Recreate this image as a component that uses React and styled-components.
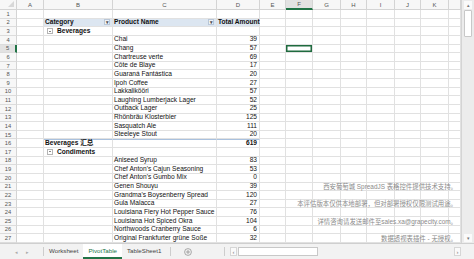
import React from 'react'
import styled, { createGlobalStyle } from 'styled-components'

const GlobalStyle = createGlobalStyle`
  html, body { margin: 0; padding: 0; background: #fff; overflow: hidden; }
  body { font-family: "Liberation Sans", Arial, "Noto Sans CJK SC", sans-serif; }
`

const COLS = ['A', 'B', 'C', 'D', 'E', 'F', 'G', 'H', 'I', 'J', 'K', 'L']
const WIDTHS = [17, 27, 69, 104, 43, 26, 27, 28, 26, 28, 26, 28, 12]
const ROW_COUNT = 27

// pivot table content, keyed by row number
const PIVOT = {
  2: { head: true },
  3: { group: 'Beverages' },
  4: { name: 'Chai', amount: 39 },
  5: { name: 'Chang', amount: 57 },
  6: { name: 'Chartreuse verte', amount: 69 },
  7: { name: 'Côte de Blaye', amount: 17 },
  8: { name: 'Guaraná Fantástica', amount: 20 },
  9: { name: 'Ipoh Coffee', amount: 27 },
  10: { name: 'Lakkalikööri', amount: 57 },
  11: { name: 'Laughing Lumberjack Lager', amount: 52 },
  12: { name: 'Outback Lager', amount: 25 },
  13: { name: 'Rhönbräu Klosterbier', amount: 125 },
  14: { name: 'Sasquatch Ale', amount: 111 },
  15: { name: 'Steeleye Stout', amount: 20 },
  16: { total: 'Beverages 汇总', amount: 619 },
  17: { group: 'Condiments' },
  18: { name: 'Aniseed Syrup', amount: 83 },
  19: { name: "Chef Anton's Cajun Seasoning", amount: 53 },
  20: { name: "Chef Anton's Gumbo Mix", amount: 0 },
  21: { name: 'Genen Shouyu', amount: 39 },
  22: { name: "Grandma's Boysenberry Spread", amount: 120 },
  23: { name: 'Gula Malacca', amount: 27 },
  24: { name: 'Louisiana Fiery Hot Pepper Sauce', amount: 76 },
  25: { name: 'Louisiana Hot Spiced Okra', amount: 104 },
  26: { name: 'Northwoods Cranberry Sauce', amount: 6 },
  27: { name: 'Original Frankfurter grüne Soße', amount: 32 },
}

const WATERMARK = [
  '西安葡萄城 SpreadJS 表格控件提供技术支持。',
  '本评估版本仅供本地部署，但对部署授权仅限测试用途。',
  '详情咨询请发送邮件至sales.xa@grapecity.com。',
  '数据透视表插件 - 无授权。',
]

const App = () => {
  const rows = []
  for (let r = 1; r <= ROW_COUNT; r++) rows.push(r)

  const renderCell = (r, c) => {
    const p = PIVOT[r]
    const col = COLS[c]
    const key = `${col}${r}`
    const inPivot = ['B', 'C', 'D'].includes(col)
    if (!p || !inPivot) {
      return <Cell key={key} $selected={key === 'F5'} />
    }
    if (p.head) {
      const label = { B: 'Category', C: 'Product Name', D: 'Total Amount' }[col]
      return (
        <Cell key={key} $head $bold $align="space-between">
          <span>{label}</span>
          {col !== 'D' && <DropButton>▾</DropButton>}
        </Cell>
      )
    }
    if (p.group) {
      return (
        <Cell key={key} $bold>
          {col === 'B' && (
            <>
              <Collapse />
              <span>{p.group}</span>
            </>
          )}
        </Cell>
      )
    }
    if (p.total) {
      return (
        <Cell key={key} $bold $totalRow $align={col === 'D' ? 'flex-end' : 'flex-start'}>
          {col === 'B' && p.total}
          {col === 'D' && p.amount}
        </Cell>
      )
    }
    return (
      <Cell key={key} $align={col === 'D' ? 'flex-end' : 'flex-start'}>
        {col === 'C' && p.name}
        {col === 'D' && p.amount}
      </Cell>
    )
  }

  return (
    <>
      <GlobalStyle />
      <Page>
        <Workarea>
          <Sheet>
            <Corner>
              <CornerMark />
            </Corner>
            {COLS.map((c) => (
              <ColHeader key={c} $active={c === 'F'}>
                {c === 'L' ? '' : c}
              </ColHeader>
            ))}
            {rows.map((r) => (
              <React.Fragment key={r}>
                <RowHeader $active={r === 5}>{r}</RowHeader>
                {COLS.map((_, c) => renderCell(r, c))}
              </React.Fragment>
            ))}
            <Watermark>
              {WATERMARK.map((t) => (
                <div key={t}>{t}</div>
              ))}
            </Watermark>
          </Sheet>
          <VScroll>
            <ArrowBox>▴</ArrowBox>
            <VThumb />
            <VTrack />
            <ArrowBox>▾</ArrowBox>
          </VScroll>
        </Workarea>
        <TabBar>
          <Tabs>
            <NavArrows>
              <span>◂</span>
              <span>▸</span>
            </NavArrows>
            <Divider />
            <Tab>Worksheet</Tab>
            <Tab $active>PivotTable</Tab>
            <Tab>TableSheet1</Tab>
          </Tabs>
          <Divider />
          <AddButton>
            <svg width="8" height="8" viewBox="0 0 8 8">
              <circle cx="4" cy="4" r="3.4" fill="none" stroke="#8a8a8a" strokeWidth="0.7" />
              <path d="M4 2v4M2 4h4" stroke="#8a8a8a" strokeWidth="0.7" />
            </svg>
          </AddButton>
          <Divider />
          <HScroll>
            <HArrow>‹</HArrow>
            <HThumb />
            <HTrack />
            <HArrow>›</HArrow>
          </HScroll>
        </TabBar>
      </Page>
    </>
  )
}

const Page = styled.div`
  width: 474px;
  height: 259px;
  display: flex;
  flex-direction: column;
  overflow: hidden;
  font-family: "Liberation Sans", Arial, "Noto Sans CJK SC", sans-serif;
`

const Workarea = styled.div`
  display: flex;
  height: 243px;
`

const Sheet = styled.div`
  position: relative;
  flex: 1;
  display: grid;
  grid-template-columns: ${WIDTHS.map((w) => `${w}px`).join(' ')};
  grid-template-rows: 10px repeat(${ROW_COUNT}, 8.63px);
  overflow: hidden;
`

const Corner = styled.div`
  background: #f7f7f7;
  border-right: 1px solid #d4d4d4;
  border-bottom: 1px solid #d4d4d4;
  position: relative;
`

const CornerMark = styled.div`
  position: absolute;
  right: 2px;
  bottom: 2px;
  width: 0;
  height: 0;
  border-left: 6px solid transparent;
  border-bottom: 6px solid #d8d8d8;
`

const ColHeader = styled.div`
  background: ${(p) => (p.$active ? '#e2e2e2' : '#f7f7f7')};
  border-right: 1px solid #d4d4d4;
  border-bottom: ${(p) => (p.$active ? '2px solid #217346' : '1px solid #d4d4d4')};
  color: #555;
  font-size: 6px;
  display: flex;
  align-items: center;
  justify-content: center;
  box-sizing: border-box;
`

const RowHeader = styled.div`
  background: ${(p) => (p.$active ? '#e2e2e2' : '#f7f7f7')};
  border-right: ${(p) => (p.$active ? '2px solid #217346' : '1px solid #d4d4d4')};
  border-bottom: 1px solid #dcdcdc;
  color: #555;
  font-size: 5.8px;
  display: flex;
  align-items: center;
  justify-content: center;
  box-sizing: border-box;
`

const Cell = styled.div`
  box-sizing: border-box;
  border-right: 1px solid #e1e1e1;
  border-bottom: 1px solid #e1e1e1;
  border-top: ${(p) => (p.$totalRow ? '1px solid #a9c1de' : 'none')};
  background: ${(p) => (p.$head ? '#dce6f1' : '#fff')};
  box-shadow: ${(p) => (p.$selected ? 'inset 0 0 0 1.5px #1f6b3f' : 'none')};
  font-size: 6.6px;
  font-weight: ${(p) => (p.$bold ? 700 : 400)};
  color: #111;
  display: flex;
  align-items: center;
  justify-content: ${(p) => p.$align || 'flex-start'};
  padding: 0 2px 0 1px;
  white-space: nowrap;
  overflow: visible;
  line-height: 1;
`

const DropButton = styled.span`
  width: 6px;
  height: 6px;
  border: 1px solid #b9c7d8;
  background: #eef3f8;
  font-size: 5px;
  color: #555;
  display: flex;
  align-items: center;
  justify-content: center;
  box-sizing: border-box;
`

const Collapse = styled.span`
  width: 6px;
  height: 6px;
  margin: 0 4px 0 2px;
  border: 1px solid #b5b5b5;
  box-sizing: border-box;
  position: relative;
  flex: none;
  &::after {
    content: '';
    position: absolute;
    left: 1px;
    right: 1px;
    top: 1.5px;
    height: 1px;
    background: #888;
  }
`

const Watermark = styled.div`
  position: absolute;
  right: 4px;
  top: 178px;
  text-align: right;
  font-size: 6.4px;
  color: #8a8a8a;
  line-height: 17.4px;
  pointer-events: none;
  font-family: "Liberation Sans", "Noto Sans CJK SC", sans-serif;
`

const VScroll = styled.div`
  width: 13px;
  background: #ececec;
  border-left: 1px solid #d4d4d4;
  display: flex;
  flex-direction: column;
  box-sizing: border-box;
  padding: 1px 2px;
  gap: 1px;
`

const ArrowBox = styled.div`
  height: 8px;
  font-size: 5px;
  color: #777;
  display: flex;
  align-items: center;
  justify-content: center;
  background: #fafafa;
`

const VThumb = styled.div`
  height: 25px;
  background: #fff;
  border: 1px solid #c8c8c8;
  border-radius: 1px;
`

const VTrack = styled.div`
  flex: 1;
`

const TabBar = styled.div`
  height: 16px;
  background: #f2f2f2;
  border-top: 1px solid #cfcfcf;
  box-sizing: border-box;
  display: flex;
  align-items: stretch;
  font-size: 6.2px;
  color: #444;
`

const Tabs = styled.div`
  width: 170px;
  display: flex;
  align-items: stretch;
`

const NavArrows = styled.div`
  width: 43px;
  display: flex;
  align-items: center;
  justify-content: center;
  gap: 8px;
  color: #aaa;
  font-size: 5px;
`

const Divider = styled.div`
  width: 1px;
  margin: 3px 0;
  background: #cdcdcd;
`

const Tab = styled.div`
  padding: 0 5px;
  display: flex;
  align-items: center;
  background: ${(p) => (p.$active ? '#fff' : 'transparent')};
  color: ${(p) => (p.$active ? '#217346' : '#444')};
  border-bottom: ${(p) => (p.$active ? '2px solid #217346' : '2px solid transparent')};
  box-sizing: border-box;
`

const AddButton = styled.div`
  width: 53px;
  display: flex;
  align-items: center;
  padding-left: 13px;
  box-sizing: border-box;
`

const HScroll = styled.div`
  flex: 1;
  display: flex;
  align-items: center;
  gap: 1px;
  padding: 0 13px 0 5px;
  box-sizing: border-box;
`

const HArrow = styled.div`
  width: 7px;
  height: 9px;
  display: flex;
  align-items: center;
  justify-content: center;
  color: #777;
  font-size: 6px;
  background: #fafafa;
  border: 1px solid #d6d6d6;
  box-sizing: border-box;
`

const HThumb = styled.div`
  width: 80px;
  height: 9px;
  background: #fff;
  border: 1px solid #c8c8c8;
  box-sizing: border-box;
`

const HTrack = styled.div`
  flex: 1;
`

export default App
